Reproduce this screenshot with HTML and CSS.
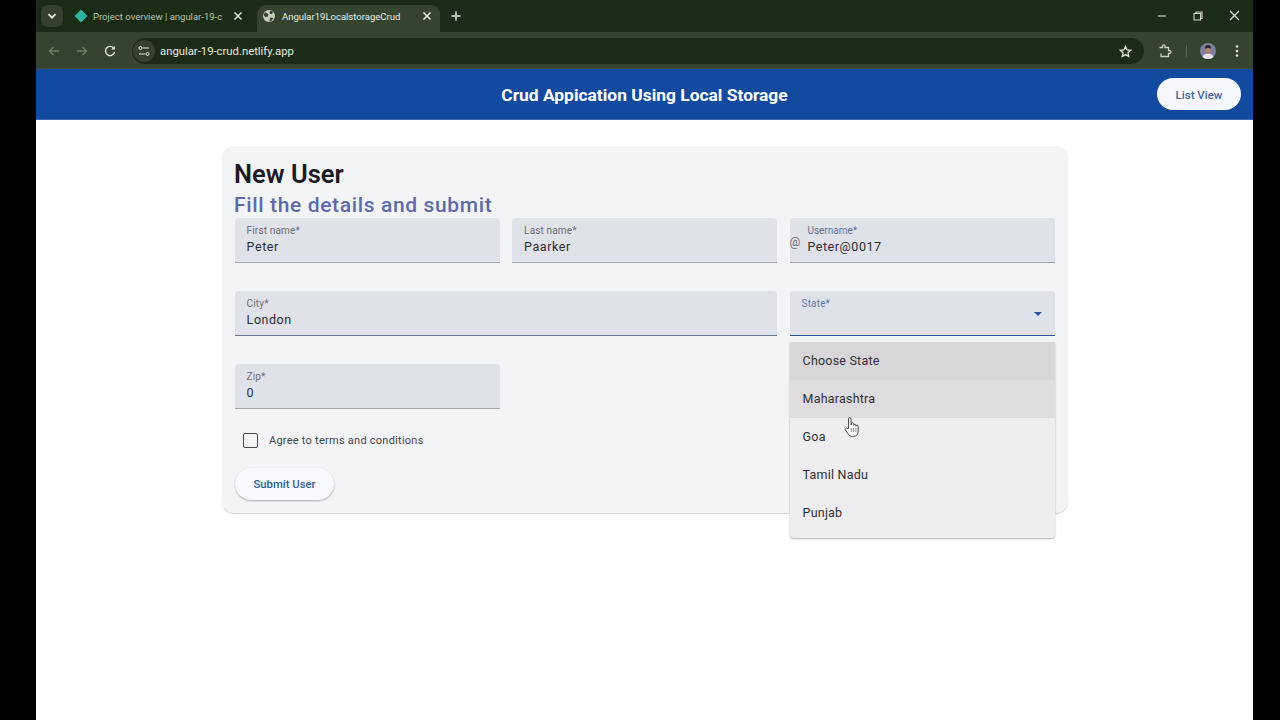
FILE: index.html
```html
<!DOCTYPE html>
<html lang="en">
<head>
<meta charset="utf-8">
<title>Angular19LocalstorageCrud</title>
<link rel="stylesheet" href="styles.css">
</head>
<body>
<div class="screen">
  <div class="window">
    <div class="tabstrip">
      <div class="tab-search"><svg width="10" height="10" viewBox="0 0 10 10"><path d="M1.5 3.2 5 6.7l3.5-3.5" fill="none" stroke="#e4ebdd" stroke-width="1.7"/></svg></div>
      <div class="tab tab-first">
        <svg class="fav" width="14" height="14" viewBox="0 0 14 14"><path d="M7 .6 13.400 7 7 13.400.6 7z" fill="#2bb5a0"/></svg>
        <span class="tab-title tab-title-dim">Project overview | angular-19-c</span>
        <svg class="tab-x" width="10" height="10" viewBox="0 0 10 10"><path d="M1.500 1.500l7 7m0-7-7 7" stroke="#dfe6d8" stroke-width="1.500"/></svg>
      </div>
      <div class="tab tab-active">
        <svg class="fav" width="14" height="14" viewBox="0 0 14 14"><circle cx="7" cy="7" r="6" fill="#c5cdbf"/><path d="M3 3.200 6.400 5 6 7.400 3.200 8 1.600 6zM8 1.500l3.200 1.600-1.600 2.200-2-.8zM8 8.400l3.400.6-2.400 3.200-1.400.2z" fill="#36432f"/></svg>
        <span class="tab-title">Angular19LocalstorageCrud</span>
        <svg class="tab-x" width="10" height="10" viewBox="0 0 10 10"><path d="M1.500 1.500l7 7m0-7-7 7" stroke="#e8eee2" stroke-width="1.500"/></svg>
      </div>
      <svg class="newtab" width="10" height="10" viewBox="0 0 10 10"><path d="M5 .5v9M.5 5h9" stroke="#dfe6d8" stroke-width="1.500"/></svg>
      <div class="win-controls">
        <svg width="10" height="10" viewBox="0 0 10 10"><path d="M1 5h8" stroke="#cfd8c8" stroke-width="1.200"/></svg>
        <svg width="10" height="10" viewBox="0 0 10 10"><path d="M3 2V1h6v6.500H8M1 2.500h6.500V9H1z" fill="none" stroke="#cfd8c8" stroke-width="1.100"/></svg>
        <svg width="11" height="11" viewBox="0 0 11 11"><path d="M1 1l9 9m0-9-9 9" stroke="#dfe6d8" stroke-width="1.300"/></svg>
      </div>
    </div>
    <div class="toolbar">
      <svg class="nav-icon" width="12" height="12" viewBox="0 0 12 12"><path d="M11 6H1.500M5.500 2 1.500 6l4 4" fill="none" stroke="#6f7f66" stroke-width="1.300"/></svg>
      <svg class="nav-icon" width="12" height="12" viewBox="0 0 12 12"><path d="M1 6h9.500M6.500 2l4 4-4 4" fill="none" stroke="#6f7f66" stroke-width="1.300"/></svg>
      <svg class="nav-icon" width="12" height="12" viewBox="0 0 12 12"><path d="M10 3.500A4.600 4.600 0 1 0 10.600 7" fill="none" stroke="#dfe6d8" stroke-width="1.400"/><path d="M10.800.8v3.600H7.200z" fill="#dfe6d8"/></svg>
      <div class="omnibox">
        <div class="site-info"><svg width="12" height="12" viewBox="0 0 12 12"><circle cx="2.500" cy="3" r="1.500" fill="none" stroke="#e4ebdd"/><path d="M5 3h6M1 9h6" stroke="#e4ebdd" stroke-width="1.200"/><circle cx="9.500" cy="9" r="1.500" fill="none" stroke="#e4ebdd"/></svg></div>
        <span class="url">angular-19-crud.netlify.app</span>
        <svg class="star" width="13" height="13" viewBox="0 0 24 24"><path d="m12 2.800 2.800 6.300 6.800.7-5.100 4.600 1.500 6.800-6-3.500-6 3.500 1.500-6.800-5.100-4.600 6.800-.7z" fill="none" stroke="#e4ebdd" stroke-width="2.400"/></svg>
      </div>
      <svg class="ext" width="14" height="14" viewBox="0 0 14 14"><path d="M1.500 3.500h3V2.200a1.300 1.300 0 0 1 2.600 0v1.300h3.400v3.200h1.200a1.300 1.300 0 0 1 0 2.600h-1.200v3.200h-7.500V9.500" fill="none" stroke="#c9d3c1" stroke-width="1.300"/></svg>
      <span class="divider"></span>
      <svg class="avatar" width="16" height="16" viewBox="0 0 16 16"><circle cx="8" cy="8" r="8" fill="#7d7f9c"/><path d="M2.500 14c1-2.800 3.200-3.600 5.500-3.600s4.500.8 5.500 3.600A8 8 0 0 1 8 16a8 8 0 0 1-5.500-2z" fill="#e8e4ea"/><ellipse cx="8" cy="7" rx="3" ry="3.700" fill="#a9806f"/><path d="M4.800 6c0-3 1.500-4 3.200-4s3.200 1 3.200 4C10 4.500 6 4.500 4.800 6z" fill="#2d2a33"/></svg>
      <svg class="menu" width="4" height="12" viewBox="0 0 4 12"><circle cx="2" cy="1.500" r="1.300" fill="#dfe6d8"/><circle cx="2" cy="6" r="1.300" fill="#dfe6d8"/><circle cx="2" cy="10.500" r="1.300" fill="#dfe6d8"/></svg>
    </div>
    <header class="appbar">
      <h1 class="app-title">Crud Appication Using Local Storage</h1>
      <button class="list-btn">List View</button>
    </header>
    <main class="content">
      <section class="card">
        <h2 class="card-title">New User</h2>
        <h3 class="card-sub">Fill the details and submit</h3>
        <div class="form-grid">
          <div class="field"><label>First name*</label><div class="value">Peter</div></div>
          <div class="field"><label>Last name*</label><div class="value">Paarker</div></div>
          <div class="field field-prefix">
            <span class="at">@</span>
            <div><label>Username*</label><div class="value">Peter@0017</div></div>
          </div>
          <div class="field span2 field-city"><label>City*</label><div class="value">London</div></div>
          <div class="field field-focus">
            <label>State*</label><div class="value">&nbsp;</div>
            <span class="caret"></span>
            <ul class="dropdown">
              <li class="opt-1">Choose State</li>
              <li class="opt-2">Maharashtra</li>
              <li>Goa</li>
              <li>Tamil Nadu</li>
              <li>Punjab</li>
            </ul>
            <svg class="cursor" width="20" height="22" viewBox="0 0 20 22"><path d="M6.500 12.500V3a1.300 1.300 0 0 1 2.600 0v6l.3-.1V7.600a1.200 1.200 0 0 1 2.300 0v1.700a1.200 1.200 0 0 1 2.300 0v1a1.100 1.100 0 0 1 2.200 0v5c0 3-1.700 5-4.500 5H10c-2 0-3-1-4-2.600l-2.700-4c-.8-1.300 1-2.400 2-1.200z" fill="#fff" stroke="#333" stroke-width=".9"/><path d="M9.300 12v4M11.600 12v4M13.900 12v4" stroke="#555" stroke-width=".7"/></svg>
          </div>
          <div class="field"><label>Zip*</label><div class="value">0</div></div>
        </div>
        <label class="agree"><span class="box"></span><span>Agree to terms and conditions</span></label>
        <button class="submit">Submit User</button>
      </section>
    </main>
  </div>
</div>
</body>
</html>
```

FILE: styles.css
```css
* { box-sizing: border-box; }
html, body { margin: 0; height: 100%; background: #000; overflow: hidden; }
body { font-family: Roboto, "Liberation Sans", sans-serif; }
.screen { height: 720px; padding: 0 27px 0 36px; }
.window { height: 720px; background: #fff; display: flex; flex-direction: column; }

.tabstrip { height: 32px; background: #1a2b16; display: flex; align-items: flex-start; padding: 5px 0 0 5px; flex: none; }
.tab-search { width: 22px; height: 22px; border-radius: 7px; background: #34412e; display: flex; align-items: center; justify-content: center; }
.tab { height: 27px; display: flex; align-items: center; font-size: 9.500px; }
.tab-first { width: 194px; padding: 0 0 5px 11px; }
.tab-active { width: 183px; padding: 0 0 5px 5px; background: #35442f; border-radius: 9px 9px 0 0; color: #e8eee2; }
.tab-title { flex: 1; white-space: nowrap; }
.tab-first .tab-title { margin-left: 5px; color: #b8c3b0; }
.tab-active .tab-title { margin-left: 6px; }
.fav { flex: none; }
.tab-x { flex: none; }
.tab-first .tab-x { margin-right: 14px; }
.tab-active .tab-x { margin-right: 8px; }
.newtab { margin: 6px 0 0 11px; }
.win-controls { margin-left: auto; display: flex; align-items: center; gap: 26px; padding: 5px 13px 0 0; }

.toolbar { height: 37px; background: #35442f; border-bottom: 1px solid #3f4d3a; display: flex; align-items: center; padding: 2px 13px 0 12px; flex: none; }
.nav-icon { flex: none; margin-right: 16px; }
.omnibox { width: 1012px; height: 26px; border-radius: 13px; background: #1c2b18; display: flex; align-items: center; padding-left: 1px; flex: none; }
.site-info { width: 22px; height: 22px; border-radius: 50%; background: #34412e; display: flex; align-items: center; justify-content: center; }
.url { margin-left: 5px; font-size: 11.300px; color: #e4ebdd; }
.star { margin-left: auto; margin-right: 12px; }
.ext { flex: none; margin-left: 14px; }
.divider { flex: none; width: 1px; height: 12px; background: #566450; margin-left: 14px; }
.avatar { flex: none; margin-left: 13px; }
.menu { flex: none; margin-left: 19px; }

.appbar { height: 51px; background: #114a9f; flex: none; display: flex; align-items: center; justify-content: center; border-bottom: 1px solid #3a6bb3; position: relative; padding-top: 1px; }
.app-title { margin: 0; color: #fff; font-size: 17.400px; font-weight: 700; }
.list-btn { position: absolute; right: 12px; top: 9px; width: 84px; height: 32px; padding: 1px 0 0; border: 0; border-radius: 16px; background: #f7f8fd; color: #46669a; font: 500 11.500px Roboto, sans-serif; }

.content { flex: 1; display: flex; justify-content: center; padding: 26px 0 0 1px; }
.card { width: 846px; height: 367px; background: #f3f4f6; border-radius: 12px; padding: 14px 13px 0 13px; box-shadow: 0 1px 1px rgba(0,0,0,.18); }
.card-title { margin: 0 0 0 -1px; font-size: 25.500px; font-weight: 600; line-height: 28px; color: #1b1b1f; }
.card-sub { margin: 3px 0 0 -1px; font-size: 21px; font-weight: 500; line-height: 28px; letter-spacing: .64px; color: #5f6aa8; }
.form-grid { display: grid; grid-template-columns: 265px 265px 265px; column-gap: 12.500px; row-gap: 28px; margin: -1px 0 0 -.4px; }
.field { position: relative; height: 45px; background: #e0e2ea; border-radius: 4px 4px 0 0; border-bottom: 1.500px solid #a3a4aa; padding: 8px 12px 0 12px; }
.field label { display: block; font-size: 10px; line-height: 10px; letter-spacing: .15px; color: #6a6d78; }
.value { font-size: 12.500px; line-height: 15px; letter-spacing: .55px; margin-top: 3px; color: #2a2b30; }
.field-prefix { display: flex; padding-left: 0; }
.field-prefix > div { margin-left: 7px; }
.at { font-size: 12px; color: #6a6d78; margin-top: 9px; }
.field-prefix label { color: #5d6f92; letter-spacing: 0; }
.span2 { grid-column: span 2; }
.field-city { border-bottom-color: #6d7896; }
.field-focus { border-bottom: 1.500px solid #2d5398; }
.field-focus label { color: #5d78a8; }
.caret { position: absolute; right: 13px; top: 21px; width: 0; height: 0; border-left: 4px solid transparent; border-right: 4px solid transparent; border-top: 4px solid #25509a; }
.dropdown { position: absolute; z-index: 2; left: 0; right: 0; top: 51px; height: 196px; margin: 0; padding: 0; list-style: none; background: #eeedf0; box-shadow: 0 1px 2px rgba(0,0,0,.3); border-radius: 0 0 4px 4px; }
.dropdown li { height: 38px; padding-left: 13px; font-size: 12.500px; line-height: 37px; letter-spacing: .2px; color: #303034; }
.opt-1 { background: #d8d6d9; }
.opt-2 { background: #dedcdf; }
.cursor { position: absolute; z-index: 3; left: 52px; top: 125px; }

.agree { display: flex; align-items: center; gap: 11px; margin: 18px 0 0 8px; font-size: 11px; letter-spacing: .25px; color: #45464c; height: 26px; }
.box { width: 15px; height: 15px; border: 1.500px solid #45464c; border-radius: 2px; }
.submit { display: block; margin-top: 15px; width: 99px; height: 32px; border: 0; border-radius: 16px; background: #f8f9fd; color: #2f609f; font: 500 11.300px Roboto, sans-serif; box-shadow: 0 1px 2px rgba(0,0,0,.3); }
```
